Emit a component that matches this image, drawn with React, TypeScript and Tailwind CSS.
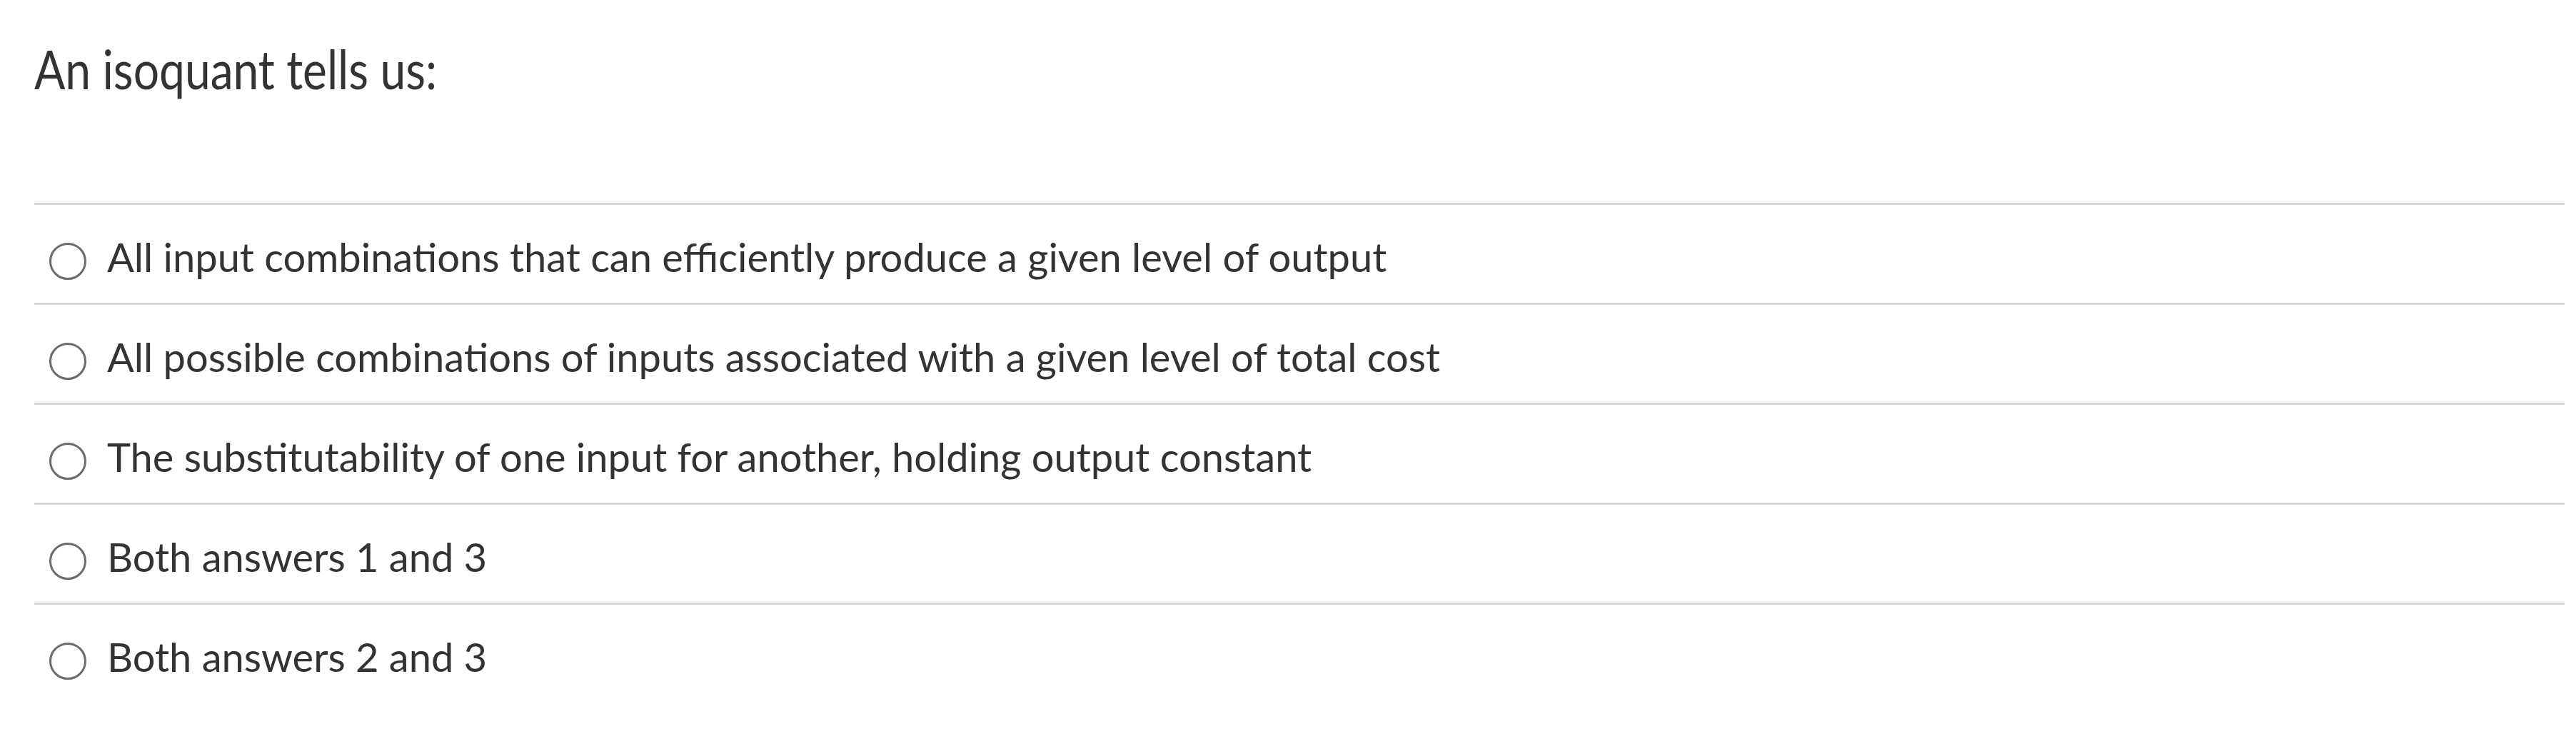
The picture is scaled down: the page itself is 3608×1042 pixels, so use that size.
const options = [
  'All input combinations that can efficiently produce a given level of output',
  'All possible combinations of inputs associated with a given level of total cost',
  'The substitutability of one input for another, holding output constant',
  'Both answers 1 and 3',
  'Both answers 2 and 3',
]

export default function App() {
  return (
    <div
      className="min-h-screen bg-white text-[#333333] pl-[48px] pr-[16px] pt-[51px]"
      style={{ fontFamily: "Lato, 'Open Sans', sans-serif" }}
    >
      {/* Question */}
      <h1 className="text-[75px] leading-[1.2] font-normal origin-left scale-x-[0.855]">
        An isoquant tells us:
      </h1>

      {/* Answers */}
      <div className="mt-[143px]">
        {options.map((opt) => (
          <label
            key={opt}
            className="flex items-start h-[140px] border-t-[3px] border-[#d6d6d6] pt-[39px]"
          >
            <span className="mt-[14px] ml-[21px] w-[52px] h-[52px] shrink-0 rounded-full border-[3px] border-[#6b6b6b] bg-white" />
            <span className="ml-[29px] text-[56px] leading-[1.2]">{opt}</span>
          </label>
        ))}
      </div>
    </div>
  )
}
